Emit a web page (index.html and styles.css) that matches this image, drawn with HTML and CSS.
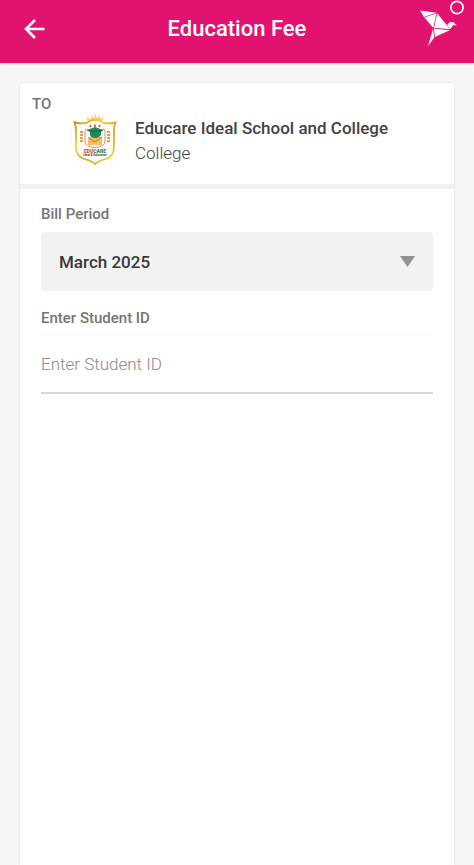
FILE: index.html
```html
<!DOCTYPE html>
<html lang="en">
<head>
    <meta charset="UTF-8">
    <meta name="viewport" content="width=device-width, initial-scale=1.0">
    <title>Education Fee</title>
    <link rel="stylesheet" href="styles.css">
</head>
<body>
    <header class="header">
        <button class="back-btn" type="button" aria-label="Back">
            <svg width="22" height="20" viewBox="0 0 22 20" fill="none" stroke="#fff" stroke-width="2.6">
                <path d="M20.500 10H3M11 1L2 10L11 19"/>
            </svg>
        </button>
        <h1 class="title">Education Fee</h1>
        <button class="menu-btn" type="button" aria-label="Menu">
            <svg width="64" height="63" viewBox="0 0 64 63">
                <g fill="#fff">
                    <path d="M10 10.600L26.600 12.800L14 17Z"/>
                    <path d="M14.400 17.600L26.400 13.500L23.300 28Z"/>
                    <path d="M27.200 13.200L40 29.200L24 27.800Z"/>
                    <path d="M23.800 28.600L39.600 30.300L25 37Z"/>
                    <path d="M23 28.800L24.200 37.400L18 46.200Z"/>
                    <path d="M37 25L39.600 22.300L43.500 22.300L46.800 25.600L43.400 25L40.300 29Z"/>
                </g>
                <circle cx="47" cy="7.500" r="6.100" fill="none" stroke="#fff" stroke-width="1.700"/>
            </svg>
        </button>
    </header>

    <main class="content">
        <div class="card">
            <section class="biller">
                <span class="to">TO</span>
                <svg class="logo" width="46" height="54" viewBox="0 0 46 54">
                    <defs>
                        <linearGradient id="gold" x1="0" y1="0" x2="1" y2="1">
                            <stop offset="0" stop-color="#b8860b"/>
                            <stop offset=".3" stop-color="#f2d13c"/>
                            <stop offset=".6" stop-color="#d9a520"/>
                            <stop offset="1" stop-color="#f5dc4a"/>
                        </linearGradient>
                    </defs>
                    <path d="M16 8L14 4L19 6L19 2L22 5L23 0L25 5L28 2L28 6L32 4L30 8Z" fill="#f8d080"/>
                    <path d="M2.5 9.5Q13 12 18 8Q23 6 28 8Q33 12 43.5 9.5Q42 13 42 18V34Q42 43 34 46Q26 48 23 51Q20 48 12 46Q4 43 4 34V18Q4 13 2.5 9.5Z" fill="#fffefa" stroke="url(#gold)" stroke-width="1.8"/>
                    <path d="M15 16Q13 16 13 19V28Q13 34 23 34.500Q33 34 33 28V19Q33 16 31 16" fill="none" stroke="#dc8b7d" stroke-width="1"/>
                    <path d="M9.500 18V30M36.500 18V30" stroke="#dfa34b" stroke-width="3" stroke-dasharray="2 1"/>
                    <path d="M19 14L18 12M23 14V11.500M27 14L28 12" stroke="#df6b4a" stroke-width="2"/>
                    <path d="M16 24H30V32H16Z" fill="#efc260"/>
                    <path d="M17 25L23 29L30 24" fill="none" stroke="#b87c28" stroke-width="1"/>
                    <path d="M15 17L23 14L31 17L29 19V22Q26 26 23 25Q19 25 18 22V19Z" fill="#23875a"/>
                    <path d="M15 17L23 19L31 17" fill="none" stroke="#10613d" stroke-width="1"/>
                    <text class="logo-name" x="23" y="40" text-anchor="middle"><tspan fill="#d94a3c">EDU</tspan><tspan fill="#168765">CARE</tspan></text>
                    <text class="logo-motto" x="23" y="43" text-anchor="middle">Ideal &amp; Education</text>
                </svg>
                <div class="biller-info">
                    <h2 class="biller-name">Educare Ideal School and College</h2>
                    <p class="biller-type">College</p>
                </div>
            </section>

            <form class="form">
                <label class="label" for="period">Bill Period</label>
                <div class="select-box">
                    <select class="period" id="period">
                        <option>March 2025</option>
                    </select>
                    <svg class="arrow" width="16" height="12" viewBox="0 0 16 12">
                        <path d="M0 0H15L7.500 11Z" fill="#929292"/>
                    </svg>
                </div>
                <label class="label" for="student">Enter Student ID</label>
                <input class="student" id="student" type="text" placeholder="Enter Student ID">
            </form>
        </div>
    </main>
</body>
</html>
```
FILE: styles.css
```css
* {
    box-sizing: border-box;
}
body {
    margin: 0;
    min-height: 100vh;
    display: flex;
    flex-direction: column;
    font-family: Roboto, sans-serif;
    background-color: #f7f7f7;
    color: #424242;
}
button {
    padding: 0;
    border: none;
    background: none;
    cursor: pointer;
}
svg {
    display: block;
}
.header {
    display: grid;
    grid-template-columns: 64px 1fr 64px;
    align-items: center;
    height: 63px;
    background-color: #e2136e;
    box-shadow: 0 1px 2px rgba(0, 0, 0, 0.15);
}
.back-btn {
    padding: 12px 0 18px 24px;
}
.title {
    margin: 0;
    padding-bottom: 6px;
    font-size: 22px;
    font-weight: 500;
    line-height: 28px;
    text-align: center;
    color: #fff;
}
.content {
    flex: 1;
    display: flex;
    padding: 20px 20px 0;
}
.card {
    flex: 1;
    background-color: #fff;
    border-radius: 4px 4px 0 0;
    box-shadow: 0 0 2px rgba(0, 0, 0, 0.15);
}
.biller {
    display: flex;
    align-items: flex-start;
    padding: 12px 12px 17px;
    border-bottom: 5px solid #f2f2f2;
}
.to {
    width: 40px;
    font-size: 15px;
    font-weight: 500;
    line-height: 18px;
    color: #757575;
}
.logo {
    margin-top: 18px;
}
.logo-name {
    font-size: 5px;
    font-weight: 900;
}
.logo-motto {
    font-size: 3px;
    font-weight: 700;
    fill: #444;
}
.biller-info {
    padding: 21px 0 0 17px;
}
.biller-name,
.biller-type {
    margin: 0;
    font-size: 17px;
    line-height: 25px;
}
.biller-name {
    font-weight: 500;
}
.biller-type {
    font-weight: 300;
}
.form {
    display: flex;
    flex-direction: column;
    padding: 16px 21px;
}
.label {
    font-size: 15px;
    font-weight: 500;
    line-height: 18px;
    color: #757575;
}
.select-box {
    display: grid;
    align-items: center;
    margin: 9px 0 18px;
}
.period,
.arrow {
    grid-area: 1 / 1;
}
.period {
    appearance: none;
    width: 100%;
    height: 59px;
    padding: 0 18px;
    border: none;
    border-radius: 4px;
    background-color: #f2f2f2;
    font-family: inherit;
    font-size: 17px;
    font-weight: 500;
    color: #383838;
}
.arrow {
    justify-self: end;
    margin-right: 17px;
    pointer-events: none;
}
.student {
    width: 100%;
    height: 59px;
    margin-top: 8px;
    padding: 0;
    border: 1px solid #fafafa;
    border-width: 1px 0 2px;
    border-bottom-color: #d8d8d8;
    background: none;
    font-family: inherit;
    font-size: 17px;
    font-weight: 300;
    color: #424242;
}
.student::placeholder {
    color: #8c8c8c;
}
```
